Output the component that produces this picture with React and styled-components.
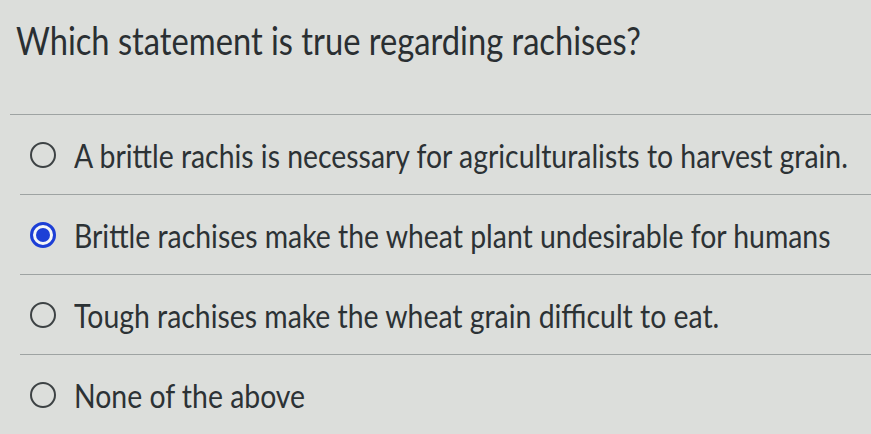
import React, { useState } from 'react';
import styled, { createGlobalStyle } from 'styled-components';

const GlobalStyle = createGlobalStyle`
  html, body {
    margin: 0;
    padding: 0;
    background: #dcdedb;
  }
  body {
    font-family: Lato, "Open Sans", sans-serif;
    color: #2c3235;
  }
`;

const Page = styled.div`
  width: 871px;
  height: 434px;
  overflow: hidden;
  background: #dcdedb;
`;

const Question = styled.h1`
  margin: 0 0 0 10px;
  padding: 17px 0 0 6px;
  height: 115px;
  box-sizing: border-box;
  border-bottom: 1.5px solid #9ea3a2;
  font-size: 38px;
  font-weight: 400;
  line-height: 46px;
  color: #2a2f32;
`;

const OptionList = styled.div`
  display: flex;
  flex-direction: column;
  padding-left: 20px;
`;

const Option = styled.label`
  display: flex;
  align-items: center;
  gap: 18px;
  height: 80px;
  box-sizing: border-box;
  padding-left: 10px;
  border-bottom: ${props => (props.$last ? 'none' : '1.5px solid #9ea3a2')};
  cursor: pointer;
  font-size: 33px;
  color: #2c3235;
`;

// the screenshot's lettering is a bit narrower than Lato at the same height
const Squeezed = styled.span`
  display: inline-block;
  white-space: nowrap;
  transform: scaleX(0.86);
  transform-origin: left center;
`;

const Radio = styled.span`
  flex: none;
  width: 26px;
  height: 26px;
  box-sizing: border-box;
  border-radius: 50%;
  border: ${props => (props.$checked ? '3px solid #1d3fd6' : '2px solid #3d4244')};
  background: ${props => (props.$checked ? '#f4f6f8' : 'transparent')};
  display: flex;
  align-items: center;
  justify-content: center;

  &::after {
    content: '';
    display: ${props => (props.$checked ? 'block' : 'none')};
    width: 14px;
    height: 14px;
    border-radius: 50%;
    background: #1d3fd6;
  }
`;

const options = [
  'A brittle rachis is necessary for agriculturalists to harvest grain.',
  'Brittle rachises make the wheat plant undesirable for humans',
  'Tough rachises make the wheat grain difficult to eat.',
  'None of the above',
];

export default function App() {
  const [selected, setSelected] = useState(1);
  return (
    <Page>
      <GlobalStyle />
      <Question>
        <Squeezed>Which statement is true regarding rachises?</Squeezed>
      </Question>
      <OptionList>
        {options.map((text, i) => (
          <Option key={i} $last={i === options.length - 1} onClick={() => setSelected(i)}>
            <Radio $checked={selected === i} />
            <Squeezed>{text}</Squeezed>
          </Option>
        ))}
      </OptionList>
    </Page>
  );
}
